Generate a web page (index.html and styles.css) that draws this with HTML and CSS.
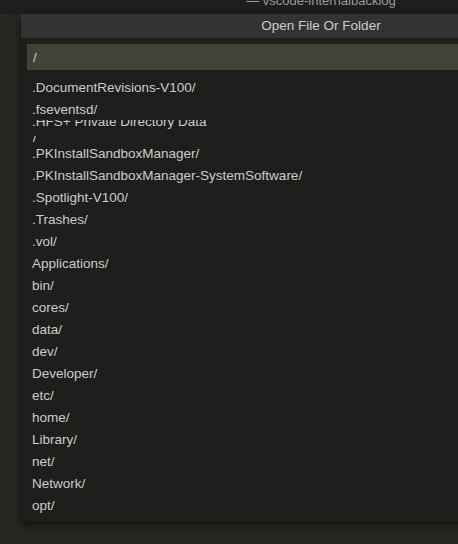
FILE: index.html
```html
<!DOCTYPE html>
<html lang="en">
<head>
    <meta charset="UTF-8">
    <title>Open File Or Folder</title>
    <link rel="stylesheet" href="styles.css">
</head>
<body>
<div class="window">
    <div class="titlebar"><span>— vscode-internalbacklog</span></div>
    <div class="workbench">
        <div class="quick-open">
            <div class="quick-title">Open File Or Folder</div>
            <div class="quick-input">
                <input type="text" value="/">
            </div>
            <div class="quick-list">
                <div class="row"><span>.DocumentRevisions-V100/</span></div>
                <div class="row"><span>.fseventsd/</span></div>
                <div class="row"><span>.HFS+ Private Directory Data<br>/</span></div>
                <div class="row"><span>.PKInstallSandboxManager/</span></div>
                <div class="row"><span>.PKInstallSandboxManager-SystemSoftware/</span></div>
                <div class="row"><span>.Spotlight-V100/</span></div>
                <div class="row"><span>.Trashes/</span></div>
                <div class="row"><span>.vol/</span></div>
                <div class="row"><span>Applications/</span></div>
                <div class="row"><span>bin/</span></div>
                <div class="row"><span>cores/</span></div>
                <div class="row"><span>data/</span></div>
                <div class="row"><span>dev/</span></div>
                <div class="row"><span>Developer/</span></div>
                <div class="row"><span>etc/</span></div>
                <div class="row"><span>home/</span></div>
                <div class="row"><span>Library/</span></div>
                <div class="row"><span>net/</span></div>
                <div class="row"><span>Network/</span></div>
                <div class="row"><span>opt/</span></div>
            </div>
        </div>
    </div>
</div>
</body>
</html>
```

FILE: styles.css
```css
html, body {
    margin: 0;
    padding: 0;
    overflow: hidden;
    background: #272822;
}
.window {
    width: 642px;
    height: 544px;
    font-family: "Liberation Sans", Arial, sans-serif;
    font-size: 13.5px;
    color: #cccccc;
}
.titlebar {
    height: 14px;
    overflow: hidden;
    background: #1e1f1c;
    text-align: center;
    color: #9a9a9a;
    font-size: 13px;
}
.titlebar span {
    display: block;
    line-height: 14px;
    margin-top: -6px;
}
.workbench {
    display: flex;
    justify-content: center;
}
.quick-open {
    width: 600px;
    background: #1e1f1c;
    box-shadow: 0 4px 8px rgba(0, 0, 0, 0.6);
    padding-bottom: 5px;
}
.quick-title {
    height: 24px;
    line-height: 24px;
    background: #333333;
    text-align: center;
}
.quick-input {
    padding: 6px 0 6px 6px;
}
.quick-input input {
    display: block;
    width: 100%;
    height: 26px;
    box-sizing: border-box;
    border: none;
    outline: none;
    padding: 0 6px;
    background: #414339;
    color: #cccccc;
    font-family: inherit;
    font-size: 13.5px;
}
.row {
    height: 22px;
    padding-left: 11px;
    display: flex;
    align-items: center;
    overflow: hidden;
}
.row span {
    line-height: 19px;
    white-space: nowrap;
}
```
